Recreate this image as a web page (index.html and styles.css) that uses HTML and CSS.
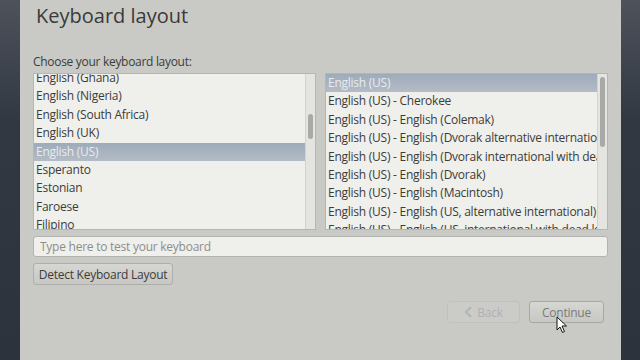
FILE: index.html
```html
<!DOCTYPE html>
<html lang="en">

<head>
    <meta charset="UTF-8">
    <title>Keyboard layout</title>
    <link rel="stylesheet" href="styles.css">
</head>

<body>
    <div class="screen">
        <div class="side"></div>

        <div class="panel">
            <h1 class="title">Keyboard layout</h1>
            <p class="prompt">Choose your keyboard layout:</p>

            <div class="lists">
                <div class="list">
                    <ul class="rows left-rows">
                        <li>English (Ghana)</li>
                        <li>English (Nigeria)</li>
                        <li>English (South Africa)</li>
                        <li>English (UK)</li>
                        <li class="selected">English (US)</li>
                        <li>Esperanto</li>
                        <li>Estonian</li>
                        <li>Faroese</li>
                        <li>Filipino</li>
                    </ul>
                    <div class="scrollbar">
                        <div class="thumb left-thumb"></div>
                    </div>
                </div>

                <div class="list">
                    <ul class="rows">
                        <li class="selected">English (US)</li>
                        <li>English (US) - Cherokee</li>
                        <li>English (US) - English (Colemak)</li>
                        <li>English (US) - English (Dvorak alternative international no dead keys)</li>
                        <li>English (US) - English (Dvorak international with dead keys)</li>
                        <li>English (US) - English (Dvorak)</li>
                        <li>English (US) - English (Macintosh)</li>
                        <li>English (US) - English (US, alternative international)</li>
                        <li>English (US) - English (US, international with dead keys)</li>
                    </ul>
                    <div class="scrollbar">
                        <div class="thumb right-thumb"></div>
                    </div>
                </div>
            </div>

            <input class="test-entry" type="text" placeholder="Type here to test your keyboard">

            <div class="button detect">Detect Keyboard Layout</div>

            <div class="nav">
                <div class="button back disabled">
                    <svg width="9" height="12" viewBox="0 0 9 12"><path d="M7 1 L2 6 L7 11" fill="none" stroke="#b4b5b2" stroke-width="2"/></svg>
                    Back
                </div>
                <div class="button continue">Continue</div>
            </div>

            <svg class="pointer" width="12" height="18" viewBox="0 0 12 18">
                <path d="M1 1 L1 14 L4 11 L6.5 16.5 L8.5 15.5 L6 10 L10.5 10 Z" fill="#fff" stroke="#111" stroke-width="1"/>
            </svg>
        </div>

        <div class="side"></div>
    </div>
</body>

</html>
```

FILE: styles.css
```css
html, body {
    margin: 0;
    height: 100%;
}

body {
    font-family: 'Open Sans', 'Noto Sans', sans-serif;
    color: #3c3c3a;
    overflow: hidden;
}

.screen {
    display: flex;
    height: 360px;
}

.side {
    width: 20px;
    background: linear-gradient(#4d525b, #323842 120px, #2c333d);
}

.side:last-child {
    width: 19px;
}

.panel {
    position: relative;
    flex: 1;
    background-color: #c9cac6;
    padding: 0 13px 0 13px;
}

.title {
    margin: 3px 0 0 3px;
    font-size: 20px;
    font-weight: normal;
    color: #3a3a38;
    line-height: 26px;
}

.prompt {
    margin: 25px 0 3px 0;
    font-size: 12px;
    line-height: 16px;
    letter-spacing: -0.3px;
    color: #3c3c3a;
}

.lists {
    display: flex;
    gap: 9px;
    width: 575px;
}

.list {
    flex: 1;
    display: flex;
    height: 155px;
    background-color: #efefec;
    border: 1px solid #b5b6b2;
    overflow: hidden;
}

.rows {
    flex: 1;
    list-style: none;
    margin: 0;
    padding: 0;
    min-width: 0;
}

.left-rows {
    margin-top: -5px;
}

.rows li {
    height: 18.4px;
    line-height: 18.4px;
    padding-left: 2px;
    font-size: 12px;
    letter-spacing: -0.25px;
    white-space: nowrap;
    overflow: hidden;
}

.rows li.selected {
    background: linear-gradient(#9eabba, #b3bcc6);
    color: #e8ebef;
}

.scrollbar {
    width: 9px;
    background-color: #e4e4e1;
    border-left: 1px solid #d2d3cf;
}

.thumb {
    margin-left: 2px;
    width: 5px;
    border-radius: 3px;
    background-color: #a9aaa7;
}

.left-thumb {
    margin-top: 40px;
    height: 25px;
}

.right-thumb {
    margin-top: 3px;
    height: 70px;
}

.test-entry {
    display: block;
    box-sizing: border-box;
    width: 575px;
    height: 21px;
    margin-top: 6px;
    padding: 0 6px;
    font-family: inherit;
    font-size: 12px;
    letter-spacing: -0.25px;
    background-color: #efefec;
    border: 1px solid #b3b4b0;
    border-radius: 3px;
}

.test-entry::placeholder {
    color: #8d8e8b;
}

.button {
    display: flex;
    align-items: center;
    justify-content: center;
    gap: 4px;
    box-sizing: border-box;
    height: 22px;
    font-size: 12px;
    letter-spacing: -0.25px;
    color: #3c3c3a;
    background: linear-gradient(#d6d7d3, #c7c8c4);
    border: 1px solid #aeafab;
    border-radius: 3px;
}

.detect {
    width: 140px;
    margin-top: 6px;
}

.nav {
    display: flex;
    justify-content: flex-end;
    gap: 9px;
    margin-top: 16px;
    width: 571px;
}

.back {
    width: 73px;
}

.disabled {
    color: #b0b1ae;
    border-color: #c0c1bd;
    background: #cbccc8;
}

.continue {
    width: 75px;
    color: #7a7b78;
    border-color: #a7a8a4;
}

.pointer {
    position: absolute;
    left: 536px;
    top: 316px;
}
```
